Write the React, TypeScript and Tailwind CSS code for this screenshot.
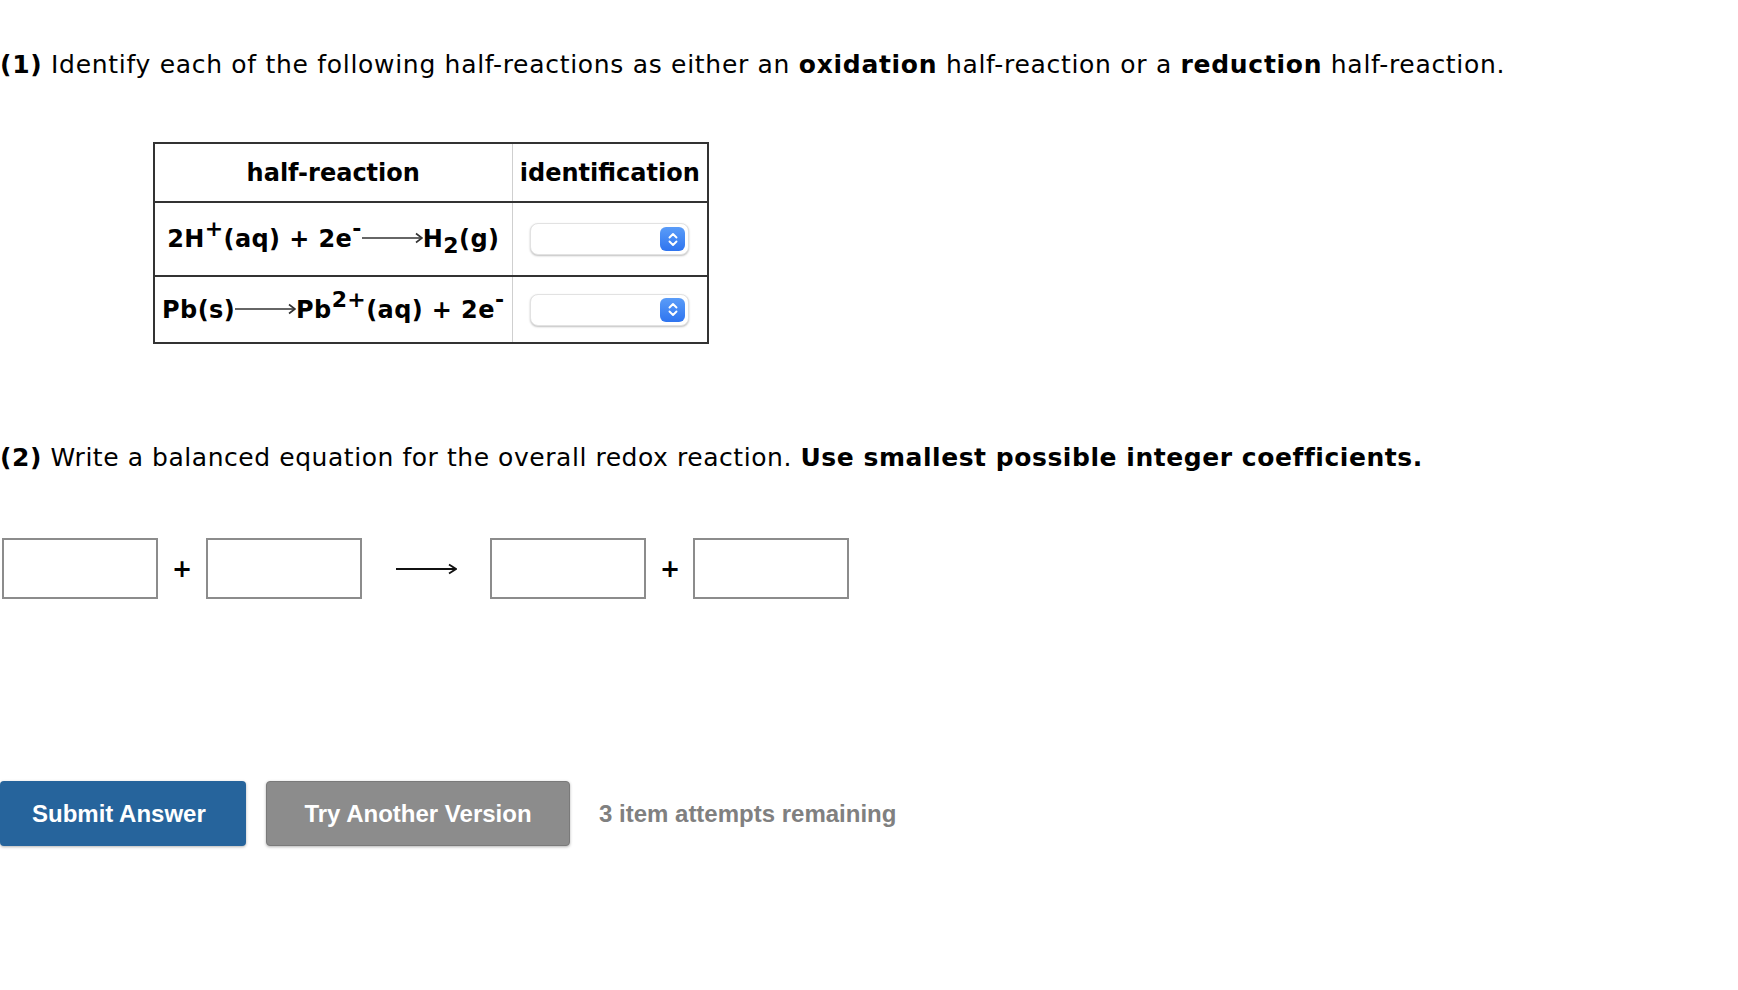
import React from 'react'

const verdana = { fontFamily: '"DejaVu Sans", Verdana, sans-serif' }
const arial = { fontFamily: '"Liberation Sans", Arial, sans-serif' }

function LongArrow({ width = 61 }: { width?: number }) {
  return (
    <svg width={width} height="14" viewBox={`0 0 ${width} 14`} className="inline-block align-middle -mt-[4px]">
      <line x1="0" y1="7" x2={width - 1} y2="7" stroke="#333" strokeWidth="1.6" />
      <polyline points={`${width - 7},2.5 ${width - 1},7 ${width - 7},11.5`} fill="none" stroke="#333" strokeWidth="1.6" />
    </svg>
  )
}

function Stepper() {
  return (
    <div className="w-[25px] h-[24px] rounded-[6px] bg-gradient-to-b from-[#5a9cf8] to-[#2f74ef] flex items-center justify-center">
      <svg width="12" height="17" viewBox="0 0 12 17">
        <polyline points="2.5,6.5 6,3 9.5,6.5" fill="none" stroke="white" strokeWidth="1.9" strokeLinecap="round" strokeLinejoin="round" />
        <polyline points="2.5,10.5 6,14 9.5,10.5" fill="none" stroke="white" strokeWidth="1.9" strokeLinecap="round" strokeLinejoin="round" />
      </svg>
    </div>
  )
}

function SelectBox() {
  return (
    <div className="mx-auto w-[159px] h-[32px] rounded-[8px] bg-white border border-[#e2e2e2] shadow-[0_1px_2px_rgba(0,0,0,0.25)] flex items-center justify-end pr-[3px]">
      <Stepper />
    </div>
  )
}

function AnswerBox() {
  return <div className="w-[156px] h-[61px] border-2 border-[#8c8c8c] bg-white" />
}

export default function App() {
  return (
    <div className="min-h-screen bg-white text-black pt-[50px]" style={verdana}>
      {/* Part 1 */}
      <p className="text-[25px] leading-[30px] tracking-[0.7px]">
        <b>(1)</b> Identify each of the following half-reactions as either an <b>oxidation</b> half-reaction or a{' '}
        <b>reduction</b> half-reaction.
      </p>

      <table className="ml-[153px] mt-[62px] border-collapse text-[24px] font-bold">
        <thead>
          <tr className="h-[59px]">
            <th className="w-[358px] border-2 border-[#333] border-r border-r-[#cfcfcf] font-bold">half-reaction</th>
            <th className="w-[196px] border-2 border-[#333] border-l-0 font-bold">identification</th>
          </tr>
        </thead>
        <tbody>
          <tr className="h-[74px]">
            <td className="border-2 border-[#333] border-r border-r-[#cfcfcf] text-center whitespace-nowrap tracking-[0.4px]">
              2H<sup className="text-[22px]">+</sup>(aq) + 2e<sup className="text-[22px]">-</sup>
              <LongArrow />H<sub className="text-[22px]">2</sub>(g)
            </td>
            <td className="border-2 border-[#333] border-l-0">
              <SelectBox />
            </td>
          </tr>
          <tr className="h-[67px]">
            <td className="border-2 border-[#333] border-r border-r-[#cfcfcf] text-center whitespace-nowrap tracking-[0.4px]">
              Pb(s)
              <LongArrow />Pb<sup className="text-[22px]">2+</sup>(aq) + 2e<sup className="text-[22px]">-</sup>
            </td>
            <td className="border-2 border-[#333] border-l-0">
              <SelectBox />
            </td>
          </tr>
        </tbody>
      </table>

      {/* Part 2 */}
      <p className="mt-[99px] text-[25px] leading-[30px] tracking-[0.55px]">
        <b>(2)</b> Write a balanced equation for the overall redox reaction. <b>Use smallest possible integer coefficients.</b>
      </p>

      <div className="mt-[65px] pl-[2px] flex items-center">
        <AnswerBox />
        <span className="ml-[14px] mr-[15px] text-[24px] font-bold w-[19px] text-center">+</span>
        <AnswerBox />
        <span className="ml-[34px] mr-[33px] flex items-center">
          <svg width="61" height="14" viewBox="0 0 61 14">
            <line x1="0" y1="7" x2="60" y2="7" stroke="#111" strokeWidth="1.8" />
            <polyline points="53,2.5 60,7 53,11.5" fill="none" stroke="#111" strokeWidth="1.8" />
          </svg>
        </span>
        <AnswerBox />
        <span className="mx-[14px] text-[24px] font-bold w-[19px] text-center">+</span>
        <AnswerBox />
      </div>

      {/* Actions */}
      <div className="mt-[182px] flex items-center" style={arial}>
        <button className="w-[246px] h-[65px] rounded-[4px] bg-[#26649c] text-white text-[24px] font-bold text-left pl-[32px] shadow-[0_1px_3px_rgba(0,0,0,0.3)]">
          Submit Answer
        </button>
        <button className="ml-[20px] w-[304px] h-[65px] rounded-[4px] bg-[#8c8c8c] border border-[#7a7a7a] text-white text-[24px] font-bold shadow-[0_1px_3px_rgba(0,0,0,0.3)]">
          Try Another Version
        </button>
        <span className="ml-[29px] text-[24px] font-bold text-[#808080]">3 item attempts remaining</span>
      </div>
    </div>
  )
}
